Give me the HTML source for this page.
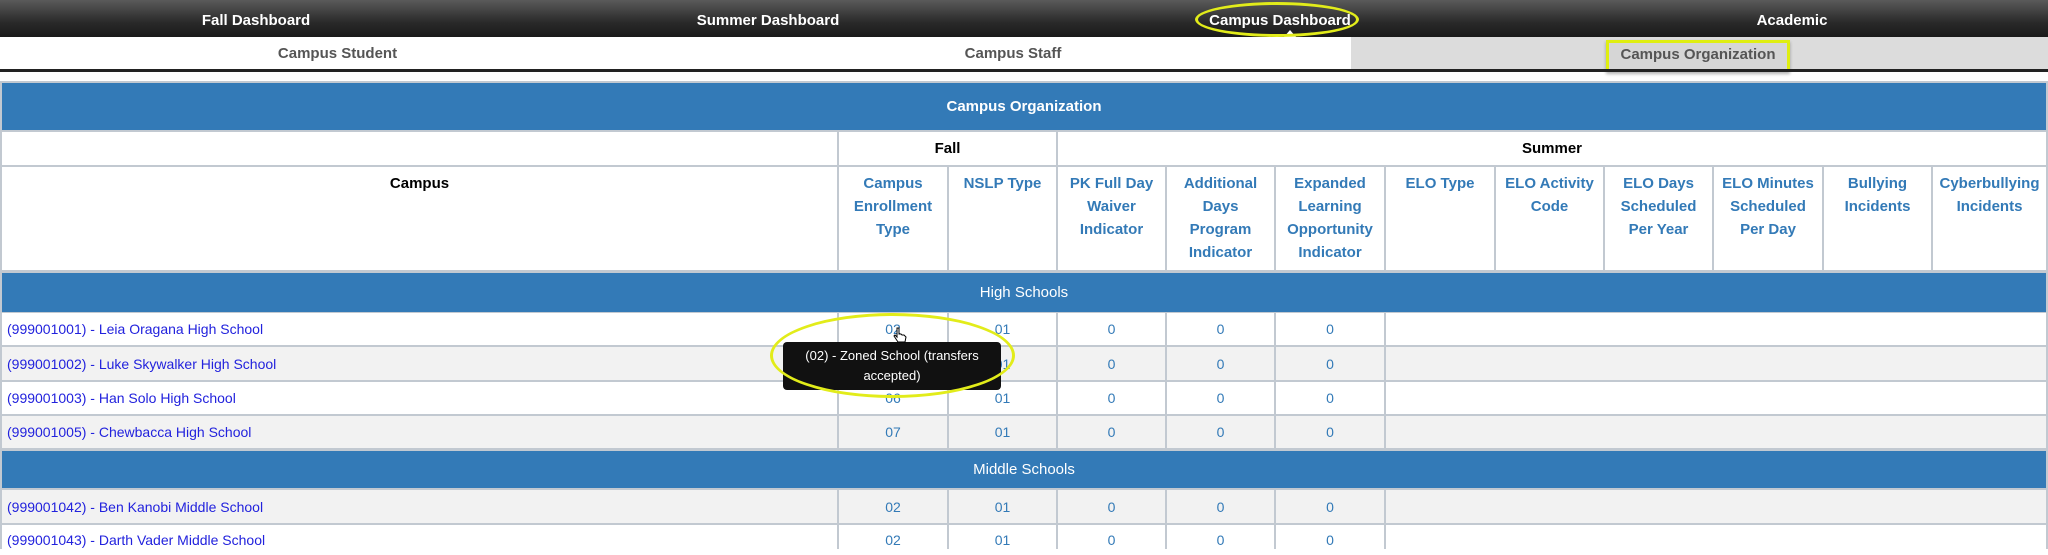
<!DOCTYPE html>
<html><head><meta charset="utf-8"><style>
*{margin:0;padding:0;box-sizing:border-box}
body{width:2048px;height:549px;overflow:hidden;background:#fff;font-family:"Liberation Sans",Arial,sans-serif;position:relative}
.a{position:absolute}
.nav{left:0;top:0;width:2048px;height:37px;background:linear-gradient(#5a5a5a,#2a2a2a 60%,#1a1a1a)}
.nv{top:0;height:37px;line-height:42px;width:512px;text-align:center;color:#fff;font-weight:bold;font-size:15px}
.sub{top:37px;height:32px;line-height:34px;text-align:center;color:#555;font-weight:bold;font-size:15px}
.c{display:flex;align-items:center;justify-content:center;text-align:center}
.hd{color:#337ab7;font-weight:bold;font-size:15px;line-height:23px;align-items:flex-start;padding:5px 12px 0}
.v{background:#c2c9d1}
.n{color:#337ab7;font-size:14px}
.l{color:#2222dd;font-size:14px;padding-left:5px;display:flex;align-items:center}
</style></head><body>
<div class="a nav"></div>
<div class="a nv" style="left:0">Fall Dashboard</div>
<div class="a nv" style="left:512px">Summer Dashboard</div>
<div class="a nv" style="left:1024px">Campus Dashboard</div>
<div class="a nv" style="left:1536px">Academic</div>
<div class="a" style="left:1284px;top:30px;width:0;height:0;border-left:6px solid transparent;border-right:6px solid transparent;border-bottom:7px solid #fff"></div>
<div class="a" style="left:1195px;top:2px;width:164px;height:35px;border:3px solid #e2ec1a;border-radius:50%"></div>

<div class="a sub" style="left:0;width:675px">Campus Student</div>
<div class="a sub" style="left:675px;width:676px">Campus Staff</div>
<div class="a sub" style="left:1351px;width:697px;background:#dcdcdc"></div>
<div class="a" style="left:1606px;top:40px;width:184px;height:32px;border:3px solid #dfee10;background:#d6d6d6;color:#555;font-weight:bold;font-size:15px;text-align:center;line-height:24px;box-shadow:0 2px 3px rgba(0,0,0,.3)">Campus Organization</div>
<div class="a" style="left:0;top:69px;width:2048px;height:3px;background:#222"></div>

<div class="a v" style="left:0;top:81px;width:2048px;height:468px"></div>
<div class="a c" style="left:2px;top:83px;width:2044px;height:47px;background:#337ab7;color:#fff;font-weight:bold;font-size:15px">Campus Organization</div>
<div class="a" style="left:2px;top:132px;width:835px;height:33px;background:#fff"></div>
<div class="a c" style="left:839px;top:132px;width:217px;height:33px;background:#fff;font-weight:bold;font-size:15px">Fall</div>
<div class="a c" style="left:1058px;top:132px;width:988px;height:33px;background:#fff;font-weight:bold;font-size:15px">Summer</div>

<div class="a c hd" style="left:2px;top:167px;width:835px;height:103px;background:#fff;color:#000">Campus</div>
<div class="a c hd" style="left:839px;top:167px;width:108px;height:103px;background:#fff">Campus Enrollment Type</div>
<div class="a c hd" style="left:949px;top:167px;width:107px;height:103px;background:#fff;padding:5px 4px 0">NSLP Type</div>
<div class="a c hd" style="left:1058px;top:167px;width:107px;height:103px;background:#fff;padding:5px 4px 0">PK Full Day Waiver Indicator</div>
<div class="a c hd" style="left:1167px;top:167px;width:107px;height:103px;background:#fff">Additional Days Program Indicator</div>
<div class="a c hd" style="left:1276px;top:167px;width:108px;height:103px;background:#fff;padding:5px 4px 0">Expanded Learning Opportunity Indicator</div>
<div class="a c hd" style="left:1386px;top:167px;width:108px;height:103px;background:#fff">ELO Type</div>
<div class="a c hd" style="left:1496px;top:167px;width:107px;height:103px;background:#fff;padding:5px 4px 0">ELO Activity Code</div>
<div class="a c hd" style="left:1605px;top:167px;width:107px;height:103px;background:#fff">ELO Days Scheduled Per Year</div>
<div class="a c hd" style="left:1714px;top:167px;width:108px;height:103px;background:#fff;padding:5px 4px 0">ELO Minutes Scheduled Per Day</div>
<div class="a c hd" style="left:1824px;top:167px;width:107px;height:103px;background:#fff">Bullying Incidents</div>
<div class="a c hd" style="left:1933px;top:167px;width:113px;height:103px;background:#fff;padding:5px 2px 0">Cyberbullying Incidents</div>

<div class="a c" style="left:2px;top:273px;width:2044px;height:39px;background:#337ab7;color:#fff;font-size:15px">High Schools</div>
<div class="a c" style="left:2px;top:451px;width:2044px;height:37px;background:#337ab7;color:#fff;font-size:15px">Middle Schools</div>

<div id="rows"></div>
<script>
var rows=[[313,32,'#fff','(999001001) - Leia Oragana High School','02'],[347,33,'#f2f2f2','(999001002) - Luke Skywalker High School','02'],[382,32,'#fff','(999001003) - Han Solo High School','06'],[416,32,'#f2f2f2','(999001005) - Chewbacca High School','07'],[490,33,'#f2f2f2','(999001042) - Ben Kanobi Middle School','02'],[525,30,'#fff','(999001043) - Darth Vader Middle School','02']];
var cols=[[839,108],[949,107],[1058,107],[1167,107],[1276,108]];
var h='';
rows.forEach(function(r){
 h+='<div class="a l" style="left:2px;top:'+r[0]+'px;width:835px;height:'+r[1]+'px;background:'+r[2]+'">'+r[3]+'</div>';
 var vals=[r[4],'01','0','0','0'];
 cols.forEach(function(c,i){h+='<div class="a c n" style="left:'+c[0]+'px;top:'+r[0]+'px;width:'+c[1]+'px;height:'+r[1]+'px;background:'+r[2]+'">'+vals[i]+'</div>';});
 h+='<div class="a" style="left:1386px;top:'+r[0]+'px;width:660px;height:'+r[1]+'px;background:'+r[2]+'"></div>';
});
document.getElementById('rows').innerHTML=h;
</script>
<div class="a" style="left:783px;top:342px;width:218px;height:48px;background:#111;border-radius:4px;color:#fff;font-size:13px;text-align:center;line-height:20px;padding-top:4px">(02) - Zoned School (transfers<br>accepted)</div>
<div class="a" style="left:770px;top:313px;width:245px;height:85px;border:3px solid #e2ec1a;border-radius:50%"></div>
<svg class="a" style="left:893px;top:327px" width="14" height="18" viewBox="0 0 14 18"><path d="M4 1v9l-2-2-1 1 4 6h7l1-5-2-2-2 0-1-1-2 0V1z" fill="#fff" stroke="#000" stroke-width="1"/></svg>
</body></html>
